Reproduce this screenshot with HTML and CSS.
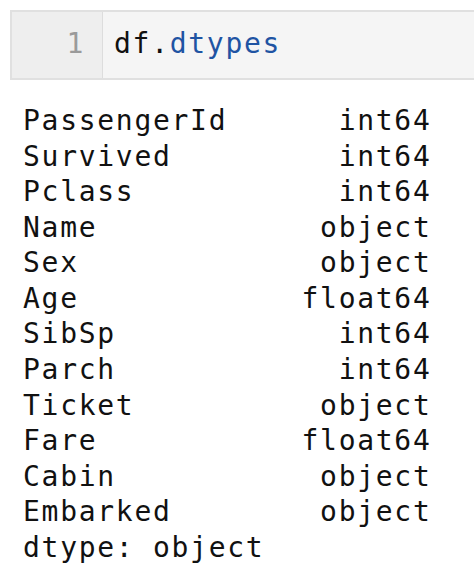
FILE: index.html
```html
<!DOCTYPE html>
<html>
<head>
<meta charset="utf-8">
<link rel="stylesheet" href="styles.css">
</head>
<body>
<div class="cell">
  <div class="gutter">1</div>
  <div class="code"><span class="var">df</span>.<span class="prop">dtypes</span></div>
</div>
<pre class="output">PassengerId      int64
Survived         int64
Pclass           int64
Name            object
Sex             object
Age            float64
SibSp            int64
Parch            int64
Ticket          object
Fare           float64
Cabin           object
Embarked        object
dtype: object</pre>
</body>
</html>
```

FILE: styles.css
```css
html, body {
  margin: 0;
  padding: 0;
  background: #ffffff;
  overflow: hidden;
}
body {
  padding: 10px 0 0 10px;
  font-family: "DejaVu Sans Mono", monospace;
  font-size: 28px;
  letter-spacing: 1.71px;
  color: #111;
}
.cell {
  display: flex;
  border: 2px solid #e0e0e0;
  border-right: none;
  background: #f5f5f5;
  box-sizing: border-box;
  height: 70px;
}
.gutter {
  width: 73px;
  padding-right: 17px;
  text-align: right;
  background: #eeeeee;
  border-right: 1px solid #dddddd;
  color: #9a9a9a;
  line-height: 32.6px;
  padding-top: 16px;
  box-sizing: content-box;
}
.code {
  padding: 16px 0 0 11px;
  line-height: 32.6px;
  color: #111;
}
.prop {
  color: #1f54a3;
}
.output {
  margin: 23px 0 0 13px;
  font: inherit;
  letter-spacing: inherit;
  line-height: 35.56px;
  color: #111;
}
```
